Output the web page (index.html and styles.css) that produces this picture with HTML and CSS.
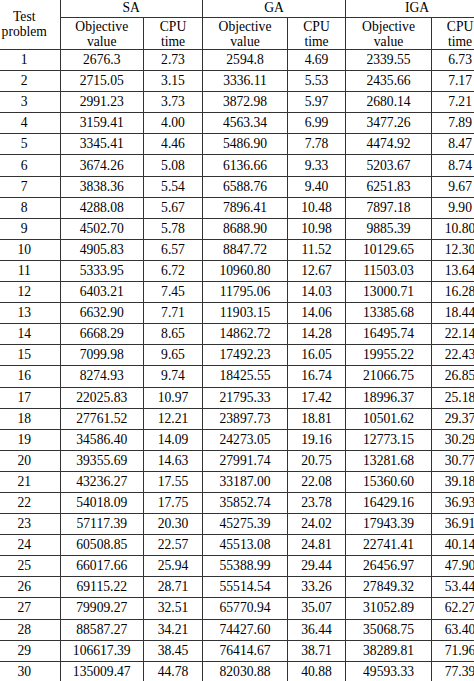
FILE: index.html
```html
<!DOCTYPE html>
<html>
<head>
<meta charset="utf-8">
<link rel="stylesheet" href="styles.css">
</head>
<body>
<table class="results">
  <colgroup>
    <col class="c-prob"><col class="c-sa-obj"><col class="c-sa-cpu"><col class="c-ga-obj"><col class="c-ga-cpu"><col class="c-iga-obj"><col class="c-iga-cpu">
  </colgroup>
  <thead>
    <tr class="head-top">
      <th rowspan="2" class="two-line">Test<br>problem</th>
      <th colspan="2">SA</th>
      <th colspan="2">GA</th>
      <th colspan="2">IGA</th>
    </tr>
    <tr class="head-sub">
      <th class="two-line">Objective<br>value</th><th class="two-line">CPU<br>time</th>
      <th class="two-line">Objective<br>value</th><th class="two-line">CPU<br>time</th>
      <th class="two-line">Objective<br>value</th><th class="two-line">CPU<br>time</th>
    </tr>
  </thead>
  <tbody>
    <tr><td>1</td><td>2676.3</td><td>2.73</td><td>2594.8</td><td>4.69</td><td>2339.55</td><td>6.73</td></tr>
    <tr><td>2</td><td>2715.05</td><td>3.15</td><td>3336.11</td><td>5.53</td><td>2435.66</td><td>7.17</td></tr>
    <tr><td>3</td><td>2991.23</td><td>3.73</td><td>3872.98</td><td>5.97</td><td>2680.14</td><td>7.21</td></tr>
    <tr><td>4</td><td>3159.41</td><td>4.00</td><td>4563.34</td><td>6.99</td><td>3477.26</td><td>7.89</td></tr>
    <tr><td>5</td><td>3345.41</td><td>4.46</td><td>5486.90</td><td>7.78</td><td>4474.92</td><td>8.47</td></tr>
    <tr><td>6</td><td>3674.26</td><td>5.08</td><td>6136.66</td><td>9.33</td><td>5203.67</td><td>8.74</td></tr>
    <tr><td>7</td><td>3838.36</td><td>5.54</td><td>6588.76</td><td>9.40</td><td>6251.83</td><td>9.67</td></tr>
    <tr><td>8</td><td>4288.08</td><td>5.67</td><td>7896.41</td><td>10.48</td><td>7897.18</td><td>9.90</td></tr>
    <tr><td>9</td><td>4502.70</td><td>5.78</td><td>8688.90</td><td>10.98</td><td>9885.39</td><td>10.80</td></tr>
    <tr><td>10</td><td>4905.83</td><td>6.57</td><td>8847.72</td><td>11.52</td><td>10129.65</td><td>12.30</td></tr>
    <tr><td>11</td><td>5333.95</td><td>6.72</td><td>10960.80</td><td>12.67</td><td>11503.03</td><td>13.64</td></tr>
    <tr><td>12</td><td>6403.21</td><td>7.45</td><td>11795.06</td><td>14.03</td><td>13000.71</td><td>16.28</td></tr>
    <tr><td>13</td><td>6632.90</td><td>7.71</td><td>11903.15</td><td>14.06</td><td>13385.68</td><td>18.44</td></tr>
    <tr><td>14</td><td>6668.29</td><td>8.65</td><td>14862.72</td><td>14.28</td><td>16495.74</td><td>22.14</td></tr>
    <tr><td>15</td><td>7099.98</td><td>9.65</td><td>17492.23</td><td>16.05</td><td>19955.22</td><td>22.43</td></tr>
    <tr><td>16</td><td>8274.93</td><td>9.74</td><td>18425.55</td><td>16.74</td><td>21066.75</td><td>26.85</td></tr>
    <tr><td>17</td><td>22025.83</td><td>10.97</td><td>21795.33</td><td>17.42</td><td>18996.37</td><td>25.18</td></tr>
    <tr><td>18</td><td>27761.52</td><td>12.21</td><td>23897.73</td><td>18.81</td><td>10501.62</td><td>29.37</td></tr>
    <tr><td>19</td><td>34586.40</td><td>14.09</td><td>24273.05</td><td>19.16</td><td>12773.15</td><td>30.29</td></tr>
    <tr><td>20</td><td>39355.69</td><td>14.63</td><td>27991.74</td><td>20.75</td><td>13281.68</td><td>30.77</td></tr>
    <tr><td>21</td><td>43236.27</td><td>17.55</td><td>33187.00</td><td>22.08</td><td>15360.60</td><td>39.18</td></tr>
    <tr><td>22</td><td>54018.09</td><td>17.75</td><td>35852.74</td><td>23.78</td><td>16429.16</td><td>36.93</td></tr>
    <tr><td>23</td><td>57117.39</td><td>20.30</td><td>45275.39</td><td>24.02</td><td>17943.39</td><td>36.91</td></tr>
    <tr><td>24</td><td>60508.85</td><td>22.57</td><td>45513.08</td><td>24.81</td><td>22741.41</td><td>40.14</td></tr>
    <tr><td>25</td><td>66017.66</td><td>25.94</td><td>55388.99</td><td>29.44</td><td>26456.97</td><td>47.90</td></tr>
    <tr><td>26</td><td>69115.22</td><td>28.71</td><td>55514.54</td><td>33.26</td><td>27849.32</td><td>53.44</td></tr>
    <tr><td>27</td><td>79909.27</td><td>32.51</td><td>65770.94</td><td>35.07</td><td>31052.89</td><td>62.27</td></tr>
    <tr><td>28</td><td>88587.27</td><td>34.21</td><td>74427.60</td><td>36.44</td><td>35068.75</td><td>63.40</td></tr>
    <tr><td>29</td><td>106617.39</td><td>38.45</td><td>76414.67</td><td>38.71</td><td>38289.81</td><td>71.96</td></tr>
    <tr><td>30</td><td>135009.47</td><td>44.78</td><td>82030.88</td><td>40.88</td><td>49593.33</td><td>77.39</td></tr>
  </tbody>
</table>
</body>
</html>
```

FILE: styles.css
```css
html, body {
  margin: 0;
  padding: 0;
  background: #ffffff;
  overflow: hidden;
}

.results {
  border-collapse: collapse;
  table-layout: fixed;
  width: 500px;
  margin-left: -12px;
  margin-top: -3px;
  font-family: "Liberation Serif", "Times New Roman", serif;
  font-size: 13.6px;
  color: #000000;
}

.c-prob { width: 71.5px; }
.c-sa-obj { width: 83.5px; }
.c-sa-cpu { width: 59px; }
.c-ga-obj { width: 85px; }
.c-ga-cpu { width: 58px; }
.c-iga-obj { width: 86px; }
.c-iga-cpu { width: 57px; }

.results th,
.results td {
  border: 1px solid #333333;
  padding: 0;
  text-align: center;
  vertical-align: middle;
  font-weight: normal;
  white-space: nowrap;
  overflow: hidden;
}

.results .two-line {
  line-height: 15px;
}

.head-top {
  height: 20px;
}

.head-sub {
  height: 32px;
}

.results tbody tr {
  height: 21.1px;
}
```
